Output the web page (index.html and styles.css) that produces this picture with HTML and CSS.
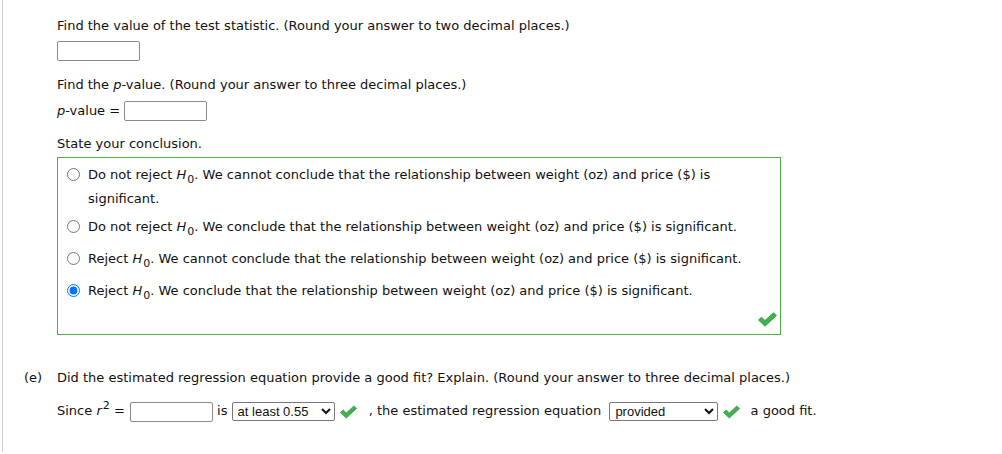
FILE: index.html
```html
<!DOCTYPE html>
<html>
<head>
  <meta charset="UTF-8">
  <title>Regression Question</title>
  <link rel="stylesheet" href="styles.css">
</head>
<body>
  <div class="page">
    <div class="content">
      <div class="prompt">Find the value of the test statistic. (Round your answer to two decimal places.)</div>
      <div class="answer-row">
        <input type="text" class="answer">
      </div>

      <div class="prompt second">Find the <i>p</i>-value. (Round your answer to three decimal places.)</div>
      <div class="answer-row pval">
        <i>p</i>-value = <input type="text" class="answer">
      </div>

      <div class="prompt third">State your conclusion.</div>

      <!-- choices -->
      <div class="choices">
        <label class="choice first">
          <input type="radio" name="concl">
          <span>Do not reject <i>H</i><sub>0</sub>. We cannot conclude that the relationship between weight (oz) and price ($) is significant.</span>
        </label>
        <label class="choice">
          <input type="radio" name="concl">
          <span>Do not reject <i>H</i><sub>0</sub>. We conclude that the relationship between weight (oz) and price ($) is significant.</span>
        </label>
        <label class="choice">
          <input type="radio" name="concl">
          <span>Reject <i>H</i><sub>0</sub>. We cannot conclude that the relationship between weight (oz) and price ($) is significant.</span>
        </label>
        <label class="choice">
          <input type="radio" name="concl" checked>
          <span>Reject <i>H</i><sub>0</sub>. We conclude that the relationship between weight (oz) and price ($) is significant.</span>
        </label>
        <div class="mark-row">
          <svg class="check" width="19" height="15" viewBox="0 0 19 15"><polygon points="0.5,8 3.5,5.2 7,8.6 15.5,0.8 18.5,3.6 7,14.2" fill="#3fb44c" stroke="#2b8f37" stroke-width="0.8" stroke-linejoin="round"/></svg>
        </div>
      </div>
    </div>

    <!-- part e -->
    <div class="part">
      <div class="part-label">(e)</div>
      <div class="part-body">
        <div class="prompt">Did the estimated regression equation provide a good fit? Explain. (Round your answer to three decimal places.)</div>
        <div class="fill-row">
          Since <i>r</i><sup>2</sup> = <input type="text" class="answer"> is
          <select class="pick narrow">
            <option>at least 0.55</option>
            <option>less than 0.55</option>
          </select><svg class="check small" width="17" height="14" viewBox="0 0 19 15"><polygon points="0.5,8 3.5,5.2 7,8.6 15.5,0.8 18.5,3.6 7,14.2" fill="#3fb44c" stroke="#2b8f37" stroke-width="0.8" stroke-linejoin="round"/></svg>
          <span class="gap wider">, the estimated regression equation</span>
          <select class="pick wide">
            <option>provided</option>
            <option>did not provide</option>
          </select><svg class="check small" width="17" height="14" viewBox="0 0 19 15"><polygon points="0.5,8 3.5,5.2 7,8.6 15.5,0.8 18.5,3.6 7,14.2" fill="#3fb44c" stroke="#2b8f37" stroke-width="0.8" stroke-linejoin="round"/></svg>
          <span class="gap">a good fit.</span>
        </div>
      </div>
    </div>
  </div>
</body>
</html>
```

FILE: styles.css
```css
body {
  margin: 0;
  font-family: "DejaVu Sans", Verdana, sans-serif;
  font-size: 13px;
  color: #111;
  background: #fff;
}

.page {
  margin-left: 2px;
  border-left: 1px solid #cfcfcf;
  height: 452px;
}

.content { padding: 18px 0 0 54px; }

.prompt { line-height: 16px; }
.prompt.second { margin-top: 16px; }
.prompt.third { margin-top: 15px; }

.answer-row { margin-top: 6px; line-height: 20px; }
.answer-row.pval { margin-top: 8px; }

input.answer {
  width: 83px;
  height: 20px;
  box-sizing: border-box;
  border: 1px solid #8a8a8a;
  border-radius: 2px;
  margin: 0;
  padding: 0 3px;
  vertical-align: middle;
}

.choices {
  margin-top: 5px;
  width: 713px;
  border: 1px solid #4fae44;
  padding: 1px 0 0 9px;
  box-sizing: content-box;
}
.choice {
  display: flex;
  align-items: flex-start;
  padding: 4px 0;
  line-height: 24px;
}
.choice.first { padding-bottom: 0; }
.choice input {
  margin: 5px 8px 0 0;
  width: 13px;
  height: 13px;
}
.choice span { max-width: 660px; }

sub { font-size: 11px; vertical-align: -4px; line-height: 0; margin-left: 1px; }
sup { font-size: 11px; vertical-align: 6px; line-height: 0; margin-left: 1px; }

.mark-row {
  display: flex;
  justify-content: flex-end;
  padding: 5px 3px 4px 0;
  height: 18px;
}

.part {
  display: flex;
  margin-top: 35px;
  padding-left: 21px;
}
.part-label { width: 33px; line-height: 16px; }
.part-body .prompt { line-height: 16px; }

.fill-row {
  margin-top: 15px;
  line-height: 20px;
  white-space: nowrap;
}
.fill-row input.answer { margin: 0 0 0 1px; }

select.pick {
  font-family: "Liberation Sans", Arial, sans-serif;
  font-size: 13px;
  height: 19px;
  padding: 0 0 0 1px;
  border: 1px solid #767676;
  border-radius: 2px;
  background: #fff;
  color: #111;
  vertical-align: middle;
  margin: 0;
}
select.narrow { width: 103px; }
select.wide { width: 109px; margin-left: 4px; }

.check { display: block; }
.check.small {
  display: inline-block;
  vertical-align: middle;
  margin-left: 5px;
}
.gap { margin-left: 6px; }
.gap.wider { margin-left: 8px; }
```
